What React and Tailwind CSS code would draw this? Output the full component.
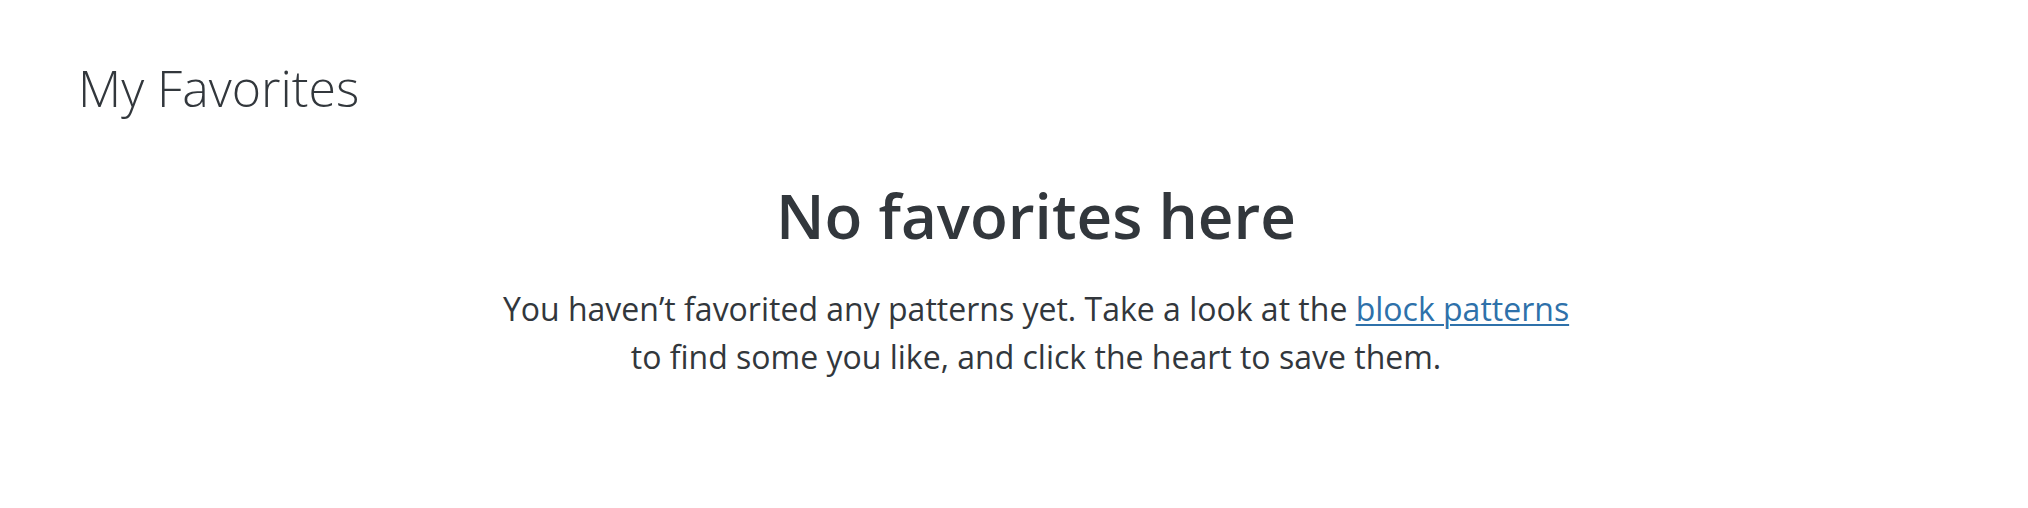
export default function App() {
    return (
        <div className="min-h-[508px] w-full bg-white text-[#32373c]" style={{ fontFamily: '"Open Sans", "Liberation Sans", sans-serif' }}>
            <div className="px-[78px] pt-[58px]">
                <h1 className="text-[50px] font-light leading-[60px]">My Favorites</h1>
            </div>
            <div className="flex flex-col items-center pl-[44px] pt-[60px] text-center">
                <h2 className="text-[62px] font-semibold leading-[74px]">No favorites here</h2>
                <p className="mt-[33px] text-[32px] leading-[48px]">
                    You haven’t favorited any patterns yet. Take a look at the{" "}
                    <a href="#" className="text-[#2e71aa] underline decoration-2 underline-offset-[3px]">block patterns</a>
                    <br />
                    to find some you like, and click the heart to save them.
                </p>
            </div>
        </div>
    )
}
